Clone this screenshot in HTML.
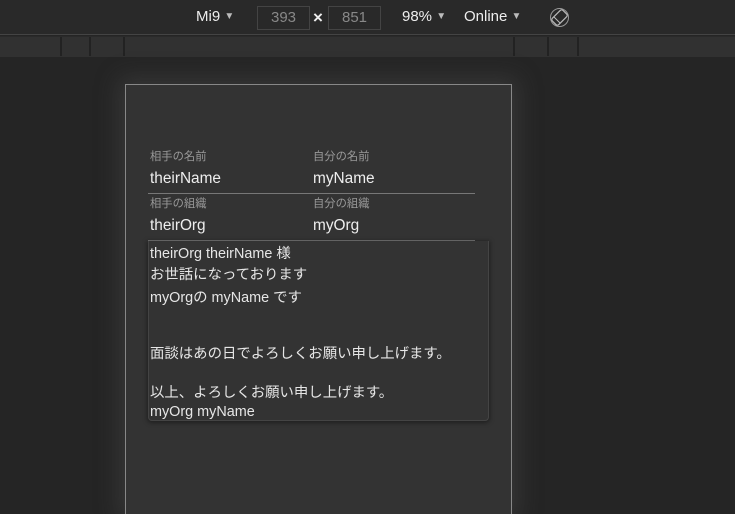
<!DOCTYPE html>
<html><head><meta charset="utf-8"><style>
*{margin:0;padding:0;box-sizing:border-box}
html,body{width:735px;height:514px;overflow:hidden}
body{background:#252525;font-family:"Liberation Sans","Noto Sans CJK JP",sans-serif;position:relative;color:#e6e6e6}
.tb{position:absolute;left:0;top:0;width:735px;height:35px;background:#292929;border-bottom:1px solid #444}
.bar2{position:absolute;left:0;top:36px;width:735px;height:21px;background:#313131;border-top:1px solid #2a2a2a}
.sep{position:absolute;top:37px;width:2px;height:19px;background:#222}
.t{position:absolute;white-space:nowrap}
.box{position:absolute;top:6px;height:24px;border:1px solid #444;color:#888;font-size:15px;text-align:center;line-height:22px}
.dev{position:absolute;left:125px;top:84px;width:387px;height:430px;background:#333;border:1px solid #888;border-bottom:none;box-shadow:0 0 22px 6px rgba(90,90,90,.35)}
.lab{position:absolute;font-size:11.3px;color:#999}
.val{position:absolute;font-size:15.4px;color:#eee}
.ul{position:absolute;height:1px;background:#777}
.ta{position:absolute;left:148px;top:241px;width:341px;height:180px;border:1px solid #444;border-top:none;border-radius:0 0 4px 4px;box-shadow:0 1px 5px 1px rgba(0,0,0,.4)}
.ln{position:absolute;left:150px;font-size:14.4px;color:#e6e6e6;white-space:nowrap}
.ar{font-size:10px;color:#bbb;vertical-align:2px}
</style></head><body>
<div class="tb"></div>
<div class="t" style="left:196px;top:8px;font-size:15px;color:#eee">Mi9 <span class="ar">▼</span></div>
<div class="box" style="left:257px;width:53px">393</div>
<div class="t" style="left:313px;top:8px;font-size:17px;color:#eee;font-weight:bold">×</div>
<div class="box" style="left:328px;width:53px">851</div>
<div class="t" style="left:402px;top:8px;font-size:15px;color:#eee">98% <span class="ar">▼</span></div>
<div class="t" style="left:464px;top:8px;font-size:15px;color:#eee">Online <span class="ar">▼</span></div>
<svg style="position:absolute;left:549px;top:7px" width="21" height="21" viewBox="0 0 21 21"><circle cx="10.5" cy="10.5" r="9" fill="none" stroke="#999" stroke-width="1"/><rect x="6" y="3" width="9" height="15" rx="2" transform="rotate(45 10.5 10.5)" fill="#292929" stroke="#bbb" stroke-width="1.2"/><line x1="5" y1="10" x2="11" y2="16" stroke="#bbb" stroke-width="1"/></svg>
<div class="bar2"></div>
<div class="sep" style="left:60px"></div><div class="sep" style="left:89px"></div><div class="sep" style="left:123px"></div>
<div class="sep" style="left:513px"></div><div class="sep" style="left:547px"></div><div class="sep" style="left:577px"></div>
<div class="dev"></div>
<div class="lab" style="left:150px;top:148px">相手の名前</div>
<div class="lab" style="left:313px;top:148px">自分の名前</div>
<div class="val" style="left:150px;top:170px">theirName</div>
<div class="val" style="left:313px;top:170px">myName</div>
<div class="ul" style="left:148px;top:193px;width:327px"></div>
<div class="lab" style="left:150px;top:195px">相手の組織</div>
<div class="lab" style="left:313px;top:195px">自分の組織</div>
<div class="val" style="left:150px;top:217px">theirOrg</div>
<div class="val" style="left:313px;top:217px">myOrg</div>
<div class="ul" style="left:148px;top:240px;width:327px"></div>
<div class="ta"></div>
<div class="ln" style="top:242px">theirOrg theirName 様</div>
<div class="ln" style="top:263px">お世話になっております</div>
<div class="ln" style="top:286px">myOrgの myName です</div>
<div class="ln" style="top:342px">面談はあの日でよろしくお願い申し上げます。</div>
<div class="ln" style="top:381px">以上、よろしくお願い申し上げます。</div>
<div class="ln" style="top:404px">myOrg myName</div>
</body></html>
